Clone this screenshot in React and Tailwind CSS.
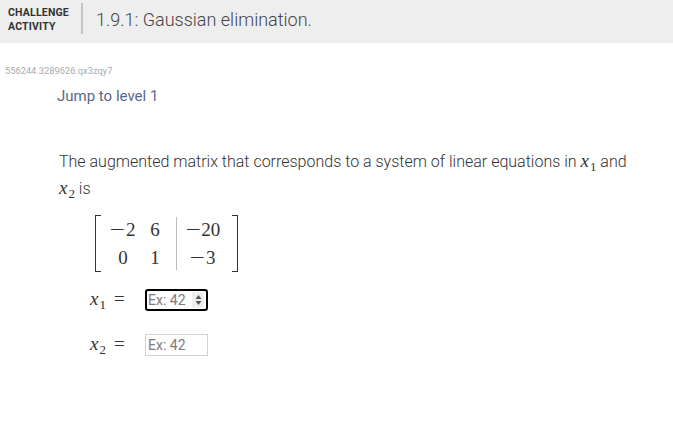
const mathFont = { fontFamily: '"Liberation Serif", "DejaVu Serif", serif' };

const Var = ({ sub }) => (
    <span className="text-[19px] text-[#333] whitespace-nowrap" style={mathFont}>
        <span className="italic">x</span>
        <span className="relative top-[4px] text-[13px] ml-[1px]">{sub}</span>
    </span>
);

const Num = ({ v }) =>
    v.startsWith('−') ? (
        <span>
            <span className="inline-block scale-x-[1.4] mr-[3px] ml-[2px]">−</span>
            {v.slice(1)}
        </span>
    ) : (
        <span>{v}</span>
    );

const Bracket = ({ side }) => (
    <div
        className={`w-[6px] h-[57px] border-[#333] border-t-[1.5px] border-b-[1.5px] ${
            side === 'left' ? 'border-l-[1.5px]' : 'border-r-[1.5px]'
        }`}
    />
);

const Matrix = () => (
    <div className="flex items-center text-[19px] text-[#333]" style={mathFont}>
        <Bracket side="left" />
        <div className="grid grid-cols-[44px_20px] justify-items-center leading-[28px]">
            <Num v="−2" />
            <Num v="6" />
            <Num v="0" />
            <Num v="1" />
        </div>
        <div className="w-px h-[53px] bg-[#bbb] ml-[11px]" />
        <div className="flex flex-col items-center w-[42px] ml-[5px] leading-[28px]">
            <Num v="−20" />
            <Num v="−3" />
        </div>
        <div className="w-[8px]" />
        <Bracket side="right" />
    </div>
);

const Answer = ({ sub, focused }) => (
    <div className="flex items-center h-[22px]">
        <div className="w-[55px] flex items-center -mt-[2px]">
            <Var sub={sub} />
            <span className="ml-[8px] text-[19px] text-[#333]" style={mathFont}>=</span>
        </div>
        {focused ? (
            <div className="flex items-center w-[63px] h-[22px] border-2 border-black rounded-[3px] bg-white">
                <input
                    type="text"
                    placeholder="Ex: 42"
                    className="w-[44px] pl-[1px] text-[14px] outline-none placeholder:text-[#7f7a80]"
                />
                <div className="flex flex-col items-center justify-center w-[12px] h-[16px] bg-[#eee] ml-[1px]">
                    <svg width="7" height="12" viewBox="0 0 7 12">
                        <path d="M3.5 1 L6.5 5 H0.5 Z" fill="#555" />
                        <path d="M3.5 11 L6.5 7 H0.5 Z" fill="#555" />
                    </svg>
                </div>
            </div>
        ) : (
            <input
                type="text"
                placeholder="Ex: 42"
                className="w-[63px] h-[22px] border border-[#ccd3d9] pl-[2px] text-[14px] outline-none placeholder:text-[#7f7a80]"
            />
        )}
    </div>
);

export default function App() {
    return (
        <div className="w-[673px] h-[423px] bg-white" style={{ fontFamily: 'Roboto, "Liberation Sans", sans-serif' }}>
            {/* header */}
            <div className="flex items-center h-[43px] bg-[#eeeeee] pl-[8px]">
                <div className="text-[10.5px] font-bold leading-[14px] text-[#333] tracking-[0.2px] -mt-[3px]">
                    CHALLENGE
                    <br />
                    ACTIVITY
                </div>
                <div className="w-[2px] h-[31px] bg-[#c4c4c4] ml-[12px] -mt-[7px]" />
                <div className="ml-[13px] text-[18px] font-light text-[#444] -mt-[4px]">1.9.1: Gaussian elimination.</div>
            </div>

            <div className="pl-[5px] mt-[23px] text-[9.3px] leading-[10px] text-[#aaa]">556244.3289626.qx3zqy7</div>

            <div className="pl-[57px] mt-[11px] text-[15px] leading-[18px] text-[#56698a]">Jump to level 1</div>

            <div className="pl-[59px] mt-[43px] text-[16px] leading-[25px] font-light text-[#333]">
                The augmented matrix that corresponds to a system of linear equations in <Var sub="1" /> and
                <br />
                <Var sub="2" /> is
            </div>

            <div className="pl-[95px] mt-[13px]">
                <Matrix />
            </div>

            <div className="pl-[90px] mt-[17px] flex flex-col gap-[23px]">
                <Answer sub="1" focused />
                <Answer sub="2" />
            </div>
        </div>
    );
}
